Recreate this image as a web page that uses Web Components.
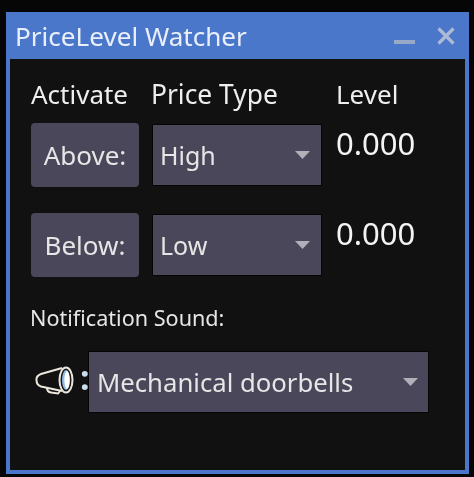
<!DOCTYPE html>
<html>
<head>
<meta charset="utf-8">
<title>PriceLevel Watcher</title>
<style>
	html, body { margin: 0; height: 477px; overflow: hidden; background: #060606; }
	body { padding: 12px 5px 3px 6px; box-sizing: border-box; font-family: "Noto Sans", "Open Sans", sans-serif; color: #e8e8e8; }
</style>
</head>
<body>
<pl-window heading="PriceLevel Watcher">
	<pl-watch-grid>
		<span slot="h1">Activate</span>
		<span slot="h2">Price Type</span>
		<span slot="h3">Level</span>
		<pl-button slot="b1">Above:</pl-button>
		<pl-select slot="s1">High</pl-select>
		<pl-value slot="v1">0.000</pl-value>
		<pl-button slot="b2">Below:</pl-button>
		<pl-select slot="s2">Low</pl-select>
		<pl-value slot="v2">0.000</pl-value>
	</pl-watch-grid>
	<pl-sound label="Notification Sound:">
		<pl-select wide>Mechanical doorbells</pl-select>
	</pl-sound>
</pl-window>

<script>
class PlWindow extends HTMLElement {
	constructor() {
		super();
		this.attachShadow({ mode: "open" });
		this.shadowRoot.innerHTML = `
		<style>
			:host {
				display: flex;
				flex-direction: column;
				box-sizing: border-box;
				width: 463px;
				height: 462px;
				border: 4px solid #4b77ca;
				border-top-width: 0;
				background: #111;
				filter: blur(0.45px);
			}
			#bar {
				display: flex;
				align-items: center;
				justify-content: space-between;
				height: 47px;
				margin: 0 -4px;
				padding: 0 14px 0 9px;
				box-sizing: border-box;
				background: #4b77ca;
				color: #eaf0fb;
				font-size: 26.1px;
			}
			#buttons { display: flex; align-items: center; gap: 22px; }
			#content { padding: 17px 0 0 21px; }
		</style>
		<div id="bar">
			<span id="title"></span>
			<div id="buttons">
				<svg width="21" height="21" viewBox="0 0 21 21"><rect x="0" y="15" width="21" height="4" fill="#98a8c8"/></svg>
				<svg width="18" height="18" viewBox="0 0 18 18"><path d="M1.5 1.5 L16.5 16.5 M16.5 1.5 L1.5 16.5" stroke="#aebad3" stroke-width="3.2" fill="none"/></svg>
			</div>
		</div>
		<div id="content"><slot></slot></div>
	`;
		this.shadowRoot.querySelector("#title").textContent = this.getAttribute("heading");
	}
}

class PlWatchGrid extends HTMLElement {
	constructor() {
		super();
		this.attachShadow({ mode: "open" });
		this.shadowRoot.innerHTML = `
		<style>
			:host {
				display: grid;
				grid-template-columns: 108px 168px auto;
				grid-template-rows: 47px 64px 26px 64px;
				column-gap: 14px;
				font-size: 26px;
				color: #eee;
			}
			.h { display: flex; align-items: center; height: 36px; }
			.price { margin-left: -2px; font-size: 26.4px; }
			.low { grid-row: 4; }
			.v { padding-left: 1px; }
		</style>
		<div class="h"><slot name="h1"></slot></div>
		<div class="h price"><slot name="h2"></slot></div>
		<div class="h v"><slot name="h3"></slot></div>
		<slot name="b1"></slot>
		<slot name="s1"></slot>
		<div class="v"><slot name="v1"></slot></div>
		<div class="low"><slot name="b2"></slot></div>
		<div class="low"><slot name="s2"></slot></div>
		<div class="low v"><slot name="v2"></slot></div>
	`;
	}
}

class PlButton extends HTMLElement {
	constructor() {
		super();
		this.attachShadow({ mode: "open" });
		this.shadowRoot.innerHTML = `
		<style>
			:host {
				display: flex;
				align-items: center;
				justify-content: center;
				box-sizing: border-box;
				width: 108px;
				height: 64px;
				border-radius: 4px;
				background: #494759;
				color: #e6e6e6;
				font-size: 26px;
			}
		</style>
		<slot></slot>
	`;
	}
}

class PlSelect extends HTMLElement {
	constructor() {
		super();
		this.attachShadow({ mode: "open" });
		this.shadowRoot.innerHTML = `
		<style>
			:host {
				display: flex;
				align-items: center;
				justify-content: space-between;
				box-sizing: border-box;
				width: 168px;
				height: 60px;
				margin-top: 2px;
				padding: 0 11px 0 7px;
				background: #494759;
				outline: 1px solid #050505;
				color: #e6e6e6;
				font-size: 25px;
			}
			:host([wide]) { width: 339px; margin-top: 0; padding-left: 8px; padding-right: 10px; font-size: 25.7px; }
			svg { flex: none; }
		</style>
		<slot></slot>
		<svg width="15" height="8" viewBox="0 0 15 8"><path d="M0 0 H15 L7.5 8 Z" fill="#b0b0b8"/></svg>
	`;
	}
}

class PlValue extends HTMLElement {
	constructor() {
		super();
		this.attachShadow({ mode: "open" });
		this.shadowRoot.innerHTML = `
		<style>
			:host { display: block; font-size: 31px; line-height: 40px; color: #f4f4f4; }
		</style>
		<slot></slot>
	`;
	}
}

class PlSound extends HTMLElement {
	constructor() {
		super();
		this.attachShadow({ mode: "open" });
		this.shadowRoot.innerHTML = `
		<style>
			:host { display: block; margin-top: 27px; margin-left: -1px; }
			#label { font-size: 21.6px; line-height: 28px; color: #e6e6e6; }
			#row { display: flex; align-items: center; margin-top: 20px; height: 60px; }
			svg { flex: none; margin: 0 0 4px 5px; }
			#colon { width: 14px; padding-left: 5px; box-sizing: border-box; font-size: 34px; line-height: 40px; font-weight: 700; color: #c9dcf0; margin-bottom: 10px; }
		</style>
		<div id="label"></div>
		<div id="row">
			<svg width="40" height="30" viewBox="0 0 40 30" fill="none" stroke="#ece6dc" stroke-width="2">
				<path d="M27 3 L6 9 Q1 11 1.5 15 Q1.5 20 6 21.5 L27 26"/>
				<path d="M12 22.5 Q12 27 16 27.5 L23 28.5 L25 26"/>
				<ellipse cx="31" cy="15" rx="6.5" ry="12.5" fill="#161616"/>
				<ellipse cx="31" cy="15" rx="4" ry="10" fill="#8fbbe6" stroke="none"/>
				<ellipse cx="32" cy="15" rx="2.6" ry="9" fill="#fff" stroke="none"/>
			</svg>
			<div id="colon">:</div>
			<slot></slot>
		</div>
	`;
		this.shadowRoot.querySelector("#label").textContent = this.getAttribute("label");
	}
}

customElements.define("pl-window", PlWindow);
customElements.define("pl-watch-grid", PlWatchGrid);
customElements.define("pl-button", PlButton);
customElements.define("pl-select", PlSelect);
customElements.define("pl-value", PlValue);
customElements.define("pl-sound", PlSound);
</script>
</body>
</html>
